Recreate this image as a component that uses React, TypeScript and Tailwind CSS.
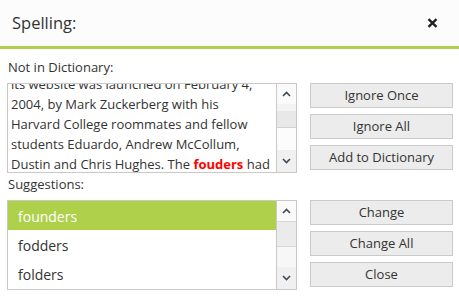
import React from "react";

const font = { fontFamily: '"Open Sans", "Noto Sans", sans-serif' };

function Chevron({ up }: { up?: boolean }) {
  return (
    <svg width="9" height="6" viewBox="0 0 9 6" className="block">
      {up ? (
        <polyline points="1,5 4.5,1.5 8,5" fill="none" stroke="#3d4a57" strokeWidth="1.6" />
      ) : (
        <polyline points="1,1 4.5,4.5 8,1" fill="none" stroke="#3d4a57" strokeWidth="1.6" />
      )}
    </svg>
  );
}

function Scrollbar({ variant }: { variant: "text" | "list" }) {
  return (
    <div className="w-[20px] border-l border-[#c9c9c9] flex flex-col bg-[#fafafa]">
      <div className="h-[20px] flex items-center justify-center bg-[#fafafa]">
        <Chevron up />
      </div>
      {variant === "text" ? (
        <>
          <div className="h-[7px] bg-[#f3f3f3]" />
          <div className="h-[17px] bg-[#e8e8e8] border-b border-[#d2d2d2]" />
          <div className="flex-1 bg-[#fcfcfc]" />
        </>
      ) : (
        <>
          <div className="h-[26px] bg-[#ebebeb] border-y border-[#d8d8d8]" />
          <div className="flex-1 bg-[#f7f7f7]" />
        </>
      )}
      <div className="h-[22px] flex items-center justify-center bg-[#f0f0f0]">
        <Chevron />
      </div>
    </div>
  );
}

function Btn({ children }: { children: React.ReactNode }) {
  return (
    <div className="h-[25px] flex items-center justify-center bg-[#ececec] border border-[#cacaca] text-[13px] text-[#333]">
      {children}
    </div>
  );
}

export default function App() {
  return (
    <div className="w-[459px] h-[298px] bg-white overflow-hidden text-[#333]" style={font}>
      <div className="h-[49px] bg-[#fcfcfc] border-b-[3px] border-[#afd04a] flex items-center justify-between pl-[12px] pr-[21px]">
        <span className="text-[16.5px] text-[#333] leading-none">Spelling:</span>
        <svg width="11" height="10" viewBox="0 0 11 10">
          <path d="M1.5 1.2 L9.5 8.8 M9.5 1.2 L1.5 8.8" stroke="#222" strokeWidth="2.4" />
        </svg>
      </div>
      <div className="pl-[7px] pr-[6px] pt-[8px]">
        <div className="h-[20px] leading-[20px] text-[13px] pl-[1px]">Not in Dictionary:</div>
        <div className="mt-[6px] flex gap-[13px]">
          <div className="w-[290px] h-[90px] border border-[#c9c9c9] flex">
            <div className="flex-1 overflow-hidden pl-[3px] text-[13px] leading-[20px] text-[#333]">
              <div className="-mt-[10px]">
                <div className="whitespace-nowrap">its website was launched on February 4,</div>
                <div className="whitespace-nowrap">2004, by Mark Zuckerberg with his</div>
                <div className="whitespace-nowrap">Harvard College roommates and fellow</div>
                <div className="whitespace-nowrap">students Eduardo, Andrew McCollum,</div>
                <div className="whitespace-nowrap">
                  Dustin and Chris Hughes. The <span className="font-bold text-[#ff0000]">fouders</span> had
                </div>
              </div>
            </div>
            <Scrollbar variant="text" />
          </div>
          <div className="flex-1 flex flex-col gap-[6px]">
            <Btn>Ignore Once</Btn>
            <Btn>Ignore All</Btn>
            <Btn>Add to Dictionary</Btn>
          </div>
        </div>
        <div className="mt-[1px] h-[20px] leading-[20px] text-[13px] pl-[1px]">Suggestions:</div>
        <div className="mt-[6px] flex gap-[13px]">
          <div className="w-[290px] h-[90px] border border-[#c9c9c9] flex">
            <div className="flex-1 overflow-hidden text-[14px]">
              <div className="h-[29px] bg-[#afd04a] text-white flex items-center pl-[10px] pt-[2px]">founders</div>
              <div className="h-[29px] flex items-center pl-[10px] pt-[2px]">fodders</div>
              <div className="h-[29px] flex items-center pl-[10px] pt-[2px]">folders</div>
            </div>
            <Scrollbar variant="list" />
          </div>
          <div className="flex-1 flex flex-col gap-[6px]">
            <Btn>Change</Btn>
            <Btn>Change All</Btn>
            <Btn>Close</Btn>
          </div>
        </div>
      </div>
    </div>
  );
}
